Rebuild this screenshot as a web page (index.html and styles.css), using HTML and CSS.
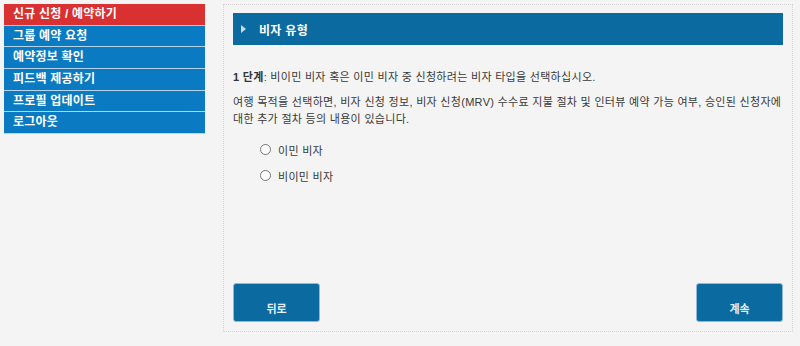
FILE: index.html
```html
<!DOCTYPE html>
<html lang="ko">
<head>
<meta charset="utf-8">
<link rel="stylesheet" href="styles.css">
</head>
<body>
<div class="page">
  <nav class="sidebar">
    <a class="nav-item active">신규 신청 / 예약하기</a>
    <a class="nav-item">그룹 예약 요청</a>
    <a class="nav-item">예약정보 확인</a>
    <a class="nav-item">피드백 제공하기</a>
    <a class="nav-item">프로필 업데이트</a>
    <a class="nav-item">로그아웃</a>
  </nav>
  <main class="panel">
    <div class="panel-header">
      <span class="tri"></span>
      <span class="panel-title">비자 유형</span>
    </div>
    <p class="step"><b>1 단계</b>: 비이민 비자 혹은 이민 비자 중 신청하려는 비자 타입을 선택하십시오.</p>
    <p class="desc">여행 목적을 선택하면, 비자 신청 정보, 비자 신청(MRV) 수수료 지불 절차 및 인터뷰 예약 가능 여부, 승인된 신청자에 대한 추가 절차 등의 내용이 있습니다.</p>
    <div class="options">
      <label class="option"><span class="radio"></span>이민 비자</label>
      <label class="option"><span class="radio"></span>비이민 비자</label>
    </div>
    <div class="actions">
      <button class="btn">뒤로</button>
      <button class="btn">계속</button>
    </div>
  </main>
</div>
</body>
</html>
```

FILE: styles.css
```css
html, body {
  margin: 0;
  padding: 0;
  background: #f4f4f4;
}
body {
  font-family: "Liberation Sans", Arial, "Noto Sans CJK KR", sans-serif;
  color: #3a3a3a;
}
.page {
  display: flex;
  align-items: flex-start;
  padding: 4px 7px 0 4px;
  gap: 18px;
}
.sidebar {
  width: 201px;
  flex: none;
  display: flex;
  flex-direction: column;
}
.nav-item {
  display: block;
  height: 20.67px;
  line-height: 20.67px;
  border-bottom: 1px solid #b7d5ea;
  background: #0a7bc2;
  color: #fff;
  font-weight: bold;
  font-size: 12px;
  padding-left: 9px;
  letter-spacing: 0.2px;
}
.nav-item.active {
  background: #d93131;
  border-bottom-color: #e9b0b0;
}
.panel {
  flex: 1;
  height: 328px;
  box-sizing: border-box;
  border: 1px dotted #d4d4d4;
  padding: 8px 9px 9px 9px;
  display: flex;
  flex-direction: column;
}
.panel-header {
  height: 32px;
  background: #0b6a9f;
  display: flex;
  align-items: center;
  padding-left: 8px;
}
.tri {
  width: 0;
  height: 0;
  border-top: 4px solid transparent;
  border-bottom: 4px solid transparent;
  border-left: 5px solid #c9dcea;
  margin-right: 13px;
}
.panel-title {
  color: #fff;
  font-weight: bold;
  font-size: 12px;
  letter-spacing: 0.3px;
}
.step {
  margin: 24px 0 0 0;
  font-size: 11px;
  line-height: 17px;
  letter-spacing: 0.3px;
}
.step b {
  color: #333;
}
.desc {
  margin: 8px 0 0 0;
  font-size: 11px;
  line-height: 17px;
  letter-spacing: 0.3px;
  word-break: keep-all;
}
.options {
  display: flex;
  flex-direction: column;
  gap: 9px;
  margin-top: 13px;
  padding-left: 27px;
}
.option {
  display: flex;
  align-items: center;
  font-size: 11px;
  height: 17px;
  letter-spacing: 0.3px;
}
.radio {
  width: 9px;
  height: 9px;
  border: 1px solid #777;
  border-radius: 50%;
  background: #fff;
  margin-right: 7px;
}
.actions {
  margin-top: auto;
  display: flex;
  justify-content: space-between;
}
.btn {
  width: 87px;
  height: 39px;
  background: #0b6a9f;
  border: 1px solid #8fb9d6;
  border-radius: 3px;
  color: #e3eef6;
  font-family: "Liberation Sans", Arial, "Noto Sans CJK KR", sans-serif;
  font-size: 11px;
  font-weight: bold;
  padding: 10px 0 0 0;
}
```
